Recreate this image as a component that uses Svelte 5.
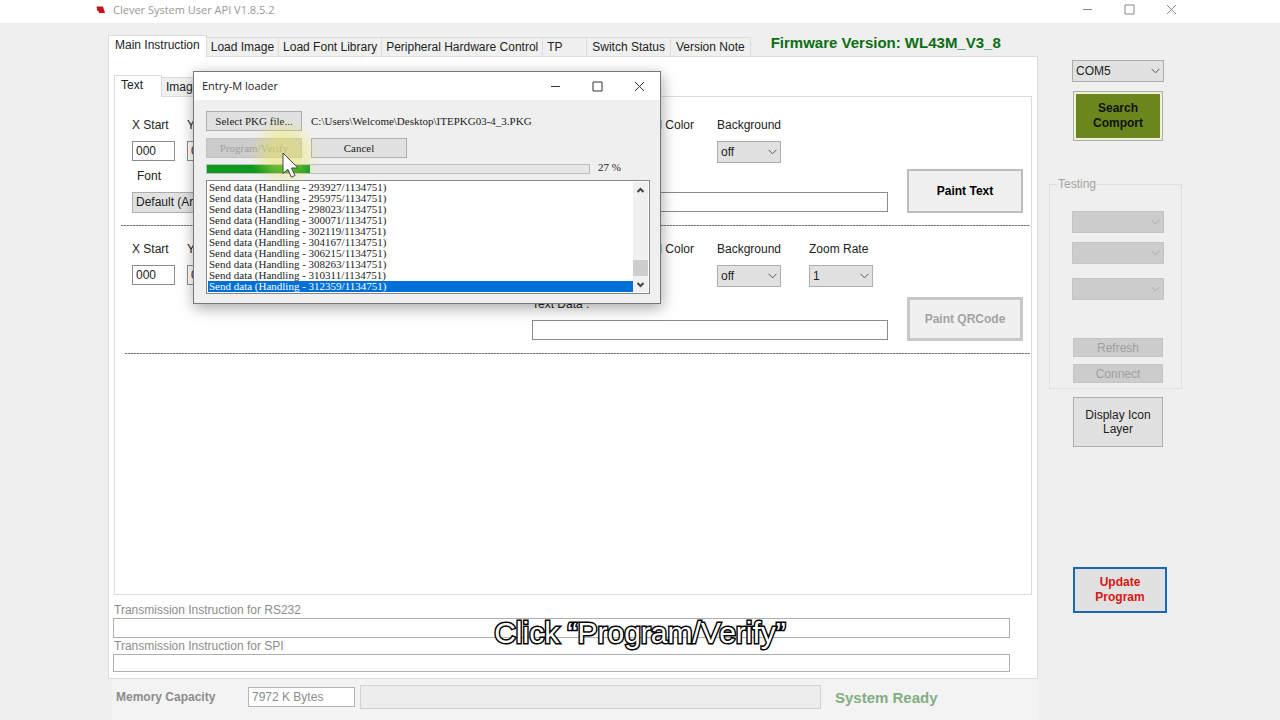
<script>
  const mainTabs = ['Main Instruction', 'Load Image', 'Load Font Library', 'Peripheral Hardware Control', 'TP', 'Switch Status', 'Version Note'];
  const sent = [293927, 295975, 298023, 300071, 302119, 304167, 306215, 308263, 310311, 312359];
  const total = 1134751;
  const percent = 27;
</script>

{#snippet windowButtons()}
  <div class="win-buttons">
    <button aria-label="Minimize"><svg width="11" height="11" viewBox="0 0 11 11"><path d="M1 5.5h9" /></svg></button>
    <button aria-label="Maximize"><svg width="11" height="11" viewBox="0 0 11 11"><path d="M1 1h9v9h-9z" /></svg></button>
    <button aria-label="Close"><svg width="11" height="11" viewBox="0 0 11 11"><path d="M1 1l9 9M10 1l-9 9" /></svg></button>
  </div>
{/snippet}

{#snippet dropdown(id, label, value, disabled)}
  <span class="dropdown" class:disabled>
    <select {id} aria-label={label} {disabled}>
      <option>{value}</option>
    </select>
    <svg width="9" height="6" viewBox="0 0 9 6"><path d="M0.5 0.8l4 4l4 -4" /></svg>
  </span>
{/snippet}

{#snippet position(group)}
  <div class="field narrow">
    <label for="{group}-x">X Start</label>
    <input id="{group}-x" value="000" />
  </div>
  <div class="field narrow">
    <label for="{group}-y">Y Start</label>
    <input id="{group}-y" value="000" />
  </div>
  <span class="color-label">Word Color</span>
  <div class="field medium">
    <label for="{group}-bg">Background</label>
    {@render dropdown(`${group}-bg`, 'Background', 'off', false)}
  </div>
{/snippet}

<div class="app">
  <header class="titlebar">
    <svg class="logo" width="9" height="8" viewBox="0 0 9 8"><path d="M0.500 0.500h6.500l2 6.500h-6l-0.600 -2h-1z" fill="#c4141a" /></svg>
    <h1>Clever System User API V1.8.5.2</h1>
    {@render windowButtons()}
  </header>

  <div class="workspace">
    <main>
      <div class="tabbar">
        <div class="tabs main-tabs" role="tablist">
          {#each mainTabs as tab, i}
            <button role="tab" aria-selected={i === 0} class:active={i === 0}>{tab}</button>
          {/each}
        </div>
        <strong class="firmware">Firmware Version: WL43M_V3_8</strong>
      </div>

      <div class="panel">
        <div class="tabs sub-tabs" role="tablist">
          <button role="tab" aria-selected="true" class="active">Text</button>
          <button role="tab" aria-selected="false">Image</button>
        </div>
        <div class="sheet">
          <section class="text-group">
            <div class="row">{@render position('text')}</div>
            <div class="row data-row">
              <div class="field font">
                <label for="font">Font</label>
                {@render dropdown('font', 'Font', 'Default (Arial)', false)}
              </div>
              <div class="field data">
                <label for="text-data">Text Data :</label>
                <input id="text-data" />
              </div>
              <button class="paint">Paint Text</button>
            </div>
          </section>
          <hr />
          <section class="code-group">
            <div class="row">
              {@render position('code')}
              <div class="field medium zoom">
                <label for="zoom">Zoom Rate</label>
                {@render dropdown('zoom', 'Zoom Rate', '1', false)}
              </div>
            </div>
            <div class="row data-row">
              <div class="field data">
                <label for="code-data">Text Data :</label>
                <input id="code-data" />
              </div>
              <button class="paint" disabled>Paint QRCode</button>
            </div>
          </section>
          <hr class="inset" />
        </div>
        <div class="transmission">
          <label for="rs232">Transmission Instruction for RS232</label>
          <input id="rs232" />
          <label for="spi">Transmission Instruction for SPI</label>
          <input id="spi" />
        </div>
      </div>

      <footer>
        <label for="memory">Memory Capacity</label>
        <input id="memory" value="7972 K Bytes" />
        <div class="message"></div>
        <strong>System Ready</strong>
      </footer>
    </main>

    <aside>
      {@render dropdown('port', 'Port', 'COM5', false)}
      <button class="search">Search<br />Comport</button>
      <fieldset>
        <legend>Testing</legend>
        {@render dropdown('test-a', 'First test option', '', true)}
        {@render dropdown('test-b', 'Second test option', '', true)}
        {@render dropdown('test-c', 'Third test option', '', true)}
        <button disabled class="refresh">Refresh</button>
        <button disabled>Connect</button>
      </fieldset>
      <button class="display">Display Icon<br />Layer</button>
      <button class="update">Update<br />Program</button>
    </aside>
  </div>

  <div class="dialog" role="dialog" aria-labelledby="loader-title">
    <div class="dialog-title">
      <h2 id="loader-title">Entry-M loader</h2>
      {@render windowButtons()}
    </div>
    <div class="dialog-body">
      <div class="actions">
        <button>Select PKG file...</button>
        <span>C:\Users\Welcome\Desktop\ITEPKG03-4_3.PKG</span>
      </div>
      <div class="actions">
        <button disabled>Program/Verify</button>
        <button>Cancel</button>
      </div>
      <div class="status">
        <progress max="100" value={percent} aria-label="Programming progress"></progress>
        <span>{percent} %</span>
      </div>
      <div class="log">
        <ul role="listbox" aria-label="Log">
          {#each sent as n, i}
            <li role="option" aria-selected={i === sent.length - 1} class:selected={i === sent.length - 1}>Send data (Handling - {n}/{total})</li>
          {/each}
        </ul>
        <div class="scrollbar">
          <button aria-label="Scroll up"><svg width="9" height="7" viewBox="0 0 9 7"><path d="M1.500 5l3 -3l3 3" /></svg></button>
          <div class="thumb"></div>
          <button aria-label="Scroll down"><svg width="9" height="7" viewBox="0 0 9 7"><path d="M1.500 2l3 3l3 -3" /></svg></button>
        </div>
      </div>
    </div>
    <div class="halo"></div>
    <svg class="cursor" width="18" height="27" viewBox="0 0 18 27"><path d="M1 1v20.500l4.800 -4.300l3.600 8l3.600 -1.700l-3.500 -7.500h6.500z" fill="#fff" stroke="#444" stroke-width="1" /></svg>
  </div>

  <p class="caption">Click “Program/Verify”</p>
</div>

<style>
  :global(body) { margin: 0; }
  .app {
    position: relative;
    display: flex;
    flex-direction: column;
    min-height: 100vh;
    background: #efefef;
    color: #222;
    font: 12px/15px "Liberation Sans", Arial, sans-serif;
  }
  .app * { box-sizing: border-box; }
  button, input, select { font: inherit; color: inherit; margin: 0; border-radius: 0; }
  button { padding: 0; border: 1px solid #adadad; background: #e1e1e1; }
  input { min-width: 0; padding: 0 3px; border: 1px solid #8c8c8c; background: #fff; }
  h1, h2, p, ul { margin: 0; padding: 0; font-weight: 400; }

  .titlebar {
    display: flex;
    align-items: center;
    height: 23px;
    padding: 0 88px 4px 96px;
    background: #fefefe;
  }
  h1 { flex: 1; margin-left: 8px; color: #999; font: 11px/18px "Open Sans", "Noto Sans", sans-serif; }
  .win-buttons { display: flex; }
  .win-buttons button {
    display: grid;
    place-items: center;
    width: 42px;
    height: 18px;
    border: 0;
    background: none;
  }
  .win-buttons path { fill: none; stroke: #888; stroke-width: 1; }

  .workspace {
    display: flex;
    flex: 1;
    gap: 11px;
    padding: 0 98px 0 108px;
  }
  main { display: flex; flex: 1; flex-direction: column; min-width: 0; }
  .tabbar { display: flex; align-items: flex-end; height: 33px; }
  .tabs { display: flex; align-items: flex-end; }
  .tabs button {
    height: 19px;
    padding: 0 4px;
    border: solid #dcdcdc;
    border-width: 1px 1px 0 0;
    background: #f0f0f0;
    white-space: nowrap;
    text-align: left;
  }
  .main-tabs button { min-width: 44px; }
  .main-tabs button:nth-last-child(-n + 2) { padding: 0 5px; }
  .tabs .active {
    position: relative;
    height: 22px;
    margin-bottom: -1px;
    padding: 0 6px 3px;
    border-left-width: 1px;
    background: #fff;
  }
  .firmware { margin: 0 0 4px 20px; color: #0a6e12; font-size: 15px; line-height: 18px; white-space: nowrap; }

  .panel {
    display: flex;
    flex: 1;
    flex-direction: column;
    padding: 17px 5px 6px;
    border: 1px solid #dcdcdc;
    background: #fff;
  }
  .sub-tabs { height: 22px; }
  .sub-tabs .active { width: 48px; }
  .sub-tabs button { width: 46px; }
  .sheet { flex: 1; padding-top: 21px; border: 1px solid #dcdcdc; }
  section { padding: 0 8px 0 17px; }
  .row { display: flex; gap: 12px; }
  .field { display: flex; flex-direction: column; }
  .field label, .color-label { height: 15px; margin-bottom: 8px; white-space: nowrap; }
  .field input { height: 20px; }
  .narrow { width: 43px; }
  .medium { width: 64px; }
  .color-label { margin-left: auto; margin-right: 11px; }
  .text-group .row:first-child { padding-right: 242px; }
  .code-group .row:first-child { padding-right: 150px; }
  .zoom { margin-left: 16px; }
  .data-row { justify-content: flex-end; gap: 19px; height: 44px; margin-top: 6px; }
  .code-group .data-row { margin-top: 10px; }
  .font { width: 160px; margin-right: auto; }
  .font label { padding-left: 5px; }
  .data { width: 356px; }
  .paint { width: 116px; height: 44px; border: 2px solid #bdbdbd; background: #f0f0f0; color: #000; font-weight: 700; }
  .paint:disabled { border-width: 3px; border-color: #c8c8c8; color: #a3a3a3; }
  hr {
    height: 1px;
    margin: 12px 1px 16px 6px;
    border: 0;
    background: repeating-linear-gradient(90deg, #777 0 2px, #bbb 2px 3px);
  }
  .inset { margin-left: 10px; }

  .dropdown { display: grid; height: 22px; align-items: center; }
  .dropdown select {
    grid-area: 1 / 1;
    width: 100%;
    height: 100%;
    padding: 0 20px 0 3px;
    appearance: none;
    border: 1px solid #adadad;
    background: #e1e1e1;
    opacity: 1;
  }
  .dropdown svg { grid-area: 1 / 1; justify-self: end; margin-right: 4px; pointer-events: none; }
  .dropdown path { fill: none; stroke: #555; stroke-width: 1; }
  .dropdown.disabled select { border-color: #c4c4c4; background: #ccc; }
  .dropdown.disabled path { stroke: #aaa; }

  .transmission { display: flex; flex-direction: column; padding: 7px 22px 0 0; color: #8c8c8c; }
  .transmission label { height: 16px; line-height: 16px; }
  .transmission input { height: 20px; margin-left: -1px; border-color: #b0b0b0; }
  .transmission #spi { height: 18px; }

  footer {
    display: flex;
    align-items: center;
    height: 41px;
    margin-left: 4px;
    padding: 0 0 5px 4px;
    background: #f3f3f3;
    color: #8c8c8c;
  }
  footer label { width: 132px; font-weight: 700; }
  footer input { width: 107px; height: 20px; border-color: #b5b5b5; }
  .message { flex: 1; height: 24px; margin: 0 14px 0 5px; border: 1px solid #d2d2d2; background: #ededed; }
  footer strong { width: 203px; color: #83ad83; font-size: 15px; }

  aside { display: flex; flex-direction: column; width: 133px; padding-top: 37px; }
  aside > .dropdown { width: 92px; margin-left: 23px; }
  aside > button { width: 90px; margin-left: 24px; }
  aside button { line-height: 14px; }
  aside .search {
    height: 50px;
    margin-top: 9px;
    background: #6a861c;
    box-shadow: inset 0 0 0 2px #eef3d6;
    color: #111;
    font-weight: 700;
    line-height: 15px;
  }
  fieldset {
    display: flex;
    flex-direction: column;
    min-width: 0;
    margin: 36px 0 0;
    padding: 19px 18px 5px 22px;
    border: 1px solid #dfdfdf;
  }
  legend { margin-left: -15px; padding: 0 1px; color: #a3a3a3; }
  fieldset .dropdown { width: 92px; }
  fieldset .dropdown + .dropdown { margin-top: 9px; }
  fieldset .dropdown + .dropdown + .dropdown { margin-top: 14px; }
  fieldset button { height: 19px; margin-left: 1px; border-color: #c4c4c4; background: #ccc; color: #a0a0a0; }
  .refresh { margin: 38px 0 7px 1px; }
  aside .display { height: 50px; margin-top: 8px; }
  aside .update {
    width: 94px;
    height: 46px;
    margin-top: 120px;
    border: 2px solid #1769b8;
    color: #d9160f;
    font-weight: 700;
    line-height: 15px;
  }

  .dialog {
    position: absolute;
    top: 71px;
    left: 193px;
    width: 468px;
    border: 1px solid #777;
    background: #efefef;
    box-shadow: 1px 4px 14px rgba(0, 0, 0, 0.35);
    color: #222;
    font: 11px/11px "Liberation Serif", "Times New Roman", serif;
  }
  .dialog-title { display: flex; align-items: center; height: 28px; background: #fff; }
  h2 { flex: 1; margin-left: 8px; font: 11px/18px "Open Sans", "Noto Sans", sans-serif; }
  .dialog-title path { stroke: #333; }
  .dialog-body { padding: 11px 10px 9px 12px; }
  .actions { display: flex; align-items: center; gap: 9px; margin-bottom: 7px; }
  .actions button { width: 96px; height: 20px; }
  .actions button:disabled { border-color: #c0c0c0; background: #ccc; color: #a0a0a0; }
  .status { display: flex; align-items: center; gap: 8px; height: 10px; margin: -1px 0 6px; }
  .status span { padding-bottom: 3px; }
  progress { display: block; width: 384px; height: 10px; appearance: none; border: 1px solid #bcbcbc; background: #e6e6e6; }
  progress::-webkit-progress-bar { background: #e6e6e6; }
  progress::-webkit-progress-value { background: #0a9a1e; }
  .log { display: flex; height: 114px; padding: 1px; border: 1px solid #828790; background: #fff; }
  ul { flex: 1; list-style: none; white-space: nowrap; }
  li { height: 11px; padding-left: 1px; line-height: 10px; }
  .selected { background: #0070d7; color: #fff; }
  .scrollbar { display: flex; flex-direction: column; width: 15px; background: #f0f0f0; }
  .scrollbar button { display: grid; place-items: center; height: 16px; border: 0; background: none; }
  .scrollbar path { fill: none; stroke: #444; stroke-width: 2; }
  .thumb { height: 16px; margin-top: auto; background: #cdcdcd; }
  .halo {
    position: absolute;
    top: 46px;
    left: 55px;
    width: 70px;
    height: 70px;
    border-radius: 50%;
    background: radial-gradient(circle, rgba(236, 230, 80, 0.45) 0 30%, rgba(236, 230, 80, 0) 70%);
    pointer-events: none;
  }
  .cursor { position: absolute; top: 80px; left: 88px; pointer-events: none; }
  .caption {
    position: absolute;
    top: 616px;
    left: 0;
    right: 0;
    color: #fff;
    font-size: 30px;
    line-height: 34px;
    text-align: center;
    -webkit-text-stroke: 3px #000;
    paint-order: stroke fill;
    pointer-events: none;
  }
</style>
